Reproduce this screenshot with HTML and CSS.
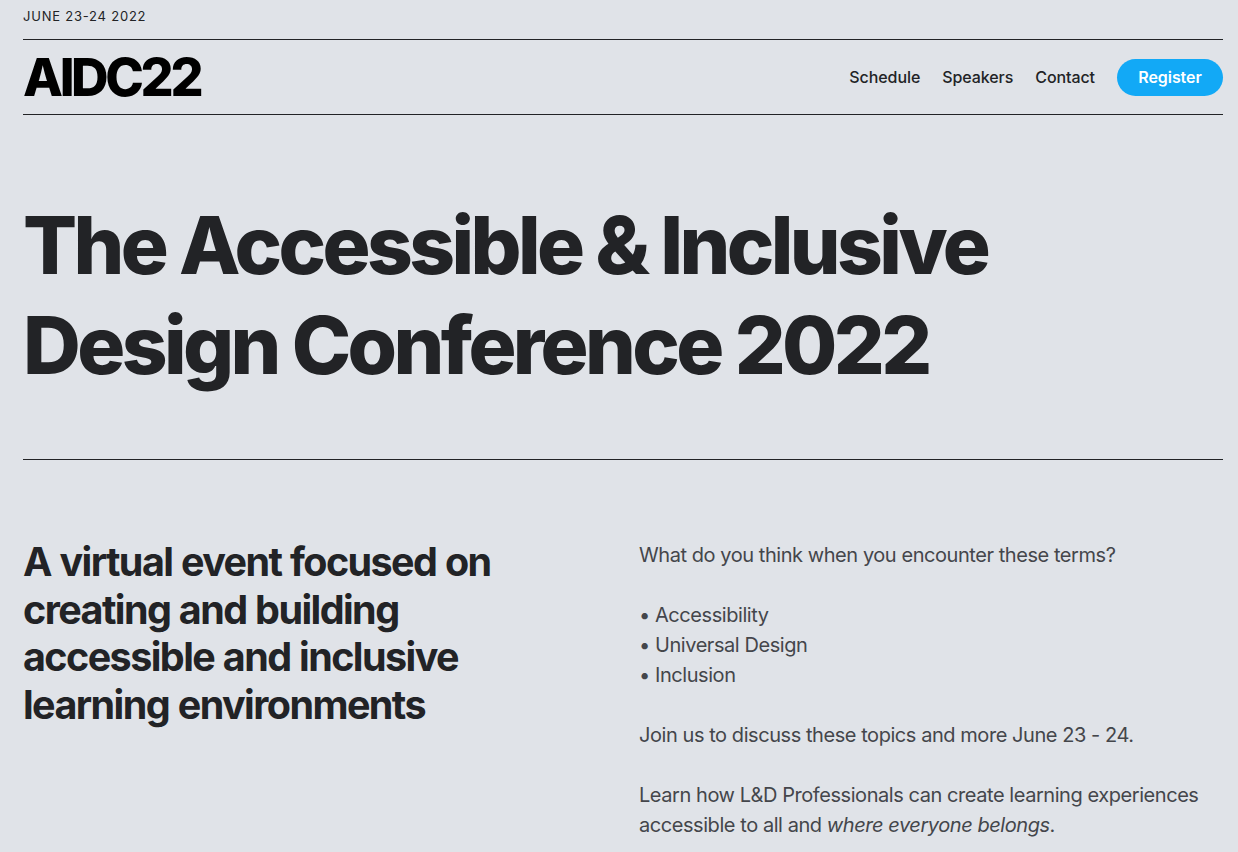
FILE: index.html
```html
<!DOCTYPE html>
<html lang="en">
<head>
<meta charset="utf-8">
<title>AIDC22</title>
<link rel="stylesheet" href="styles.css">
</head>
<body>
<div class="page">
  <div class="date">JUNE 23-24 2022</div>
  <header class="header">
    <a class="logo" href="#">AIDC22</a>
    <nav class="nav">
      <a href="#">Schedule</a>
      <a href="#">Speakers</a>
      <a href="#">Contact</a>
      <a class="register" href="#">Register</a>
    </nav>
  </header>
  <section class="hero">
    <h1>The Accessible &amp; Inclusive<br>Design Conference 2022</h1>
  </section>
  <section class="intro">
    <h2>A virtual event focused on creating and building accessible and inclusive learning environments</h2>
    <div class="copy">
      <p>What do you think when you encounter these terms?</p>
      <p>• Accessibility<br>• Universal Design<br>• Inclusion</p>
      <p>Join us to discuss these topics and more June 23 - 24.</p>
      <p>Learn how L&amp;D Professionals can create learning experiences accessible to all and <em>where everyone belongs</em>.</p>
    </div>
  </section>
</div>
</body>
</html>
```

FILE: styles.css
```css
* { box-sizing: border-box; }
html, body { margin: 0; padding: 0; }
body {
  background: #e0e3e8;
  color: #222326;
  font-family: Inter, "Noto Sans", sans-serif;
}
.page {
  width: 1200px;
  margin-left: 23px;
}
.date {
  font-size: 13px;
  letter-spacing: 0.06em;
  line-height: 16px;
  padding-top: 8px;
  padding-bottom: 15px;
  color: #222326;
}
.header {
  display: flex;
  align-items: center;
  justify-content: space-between;
  border-top: 1px solid #222326;
  border-bottom: 1px solid #222326;
  height: 76px;
}
.logo {
  font-size: 52px;
  font-weight: 800;
  letter-spacing: -0.065em;
  color: #000;
  text-decoration: none;
  line-height: 1;
  margin-top: 2px;
}
.nav {
  display: flex;
  align-items: center;
  gap: 22px;
}
.nav a {
  font-size: 16px;
  font-weight: 500;
  color: #222326;
  text-decoration: none;
  letter-spacing: -0.005em;
}
.nav a.register {
  background: #12a9f6;
  color: #fff;
  font-weight: 600;
  height: 37px;
  line-height: 37px;
  border-radius: 19px;
  width: 106px;
  text-align: center;
}
.hero {
  border-bottom: 1px solid #222326;
  padding-top: 80px;
  padding-bottom: 64px;
}
.hero h1 {
  margin: 0;
  font-size: 80px;
  font-weight: 800;
  line-height: 100px;
  letter-spacing: -0.045em;
}
.intro {
  display: grid;
  grid-template-columns: 584px 584px;
  column-gap: 32px;
  padding-top: 79px;
}
.intro h2 {
  margin: 0;
  max-width: 480px;
  font-size: 39.5px;
  font-weight: 700;
  line-height: 47.5px;
  letter-spacing: -0.04em;
  word-spacing: 0.02em;
}
.copy {
  font-size: 20px;
  line-height: 30px;
  color: #44464b;
  letter-spacing: -0.022em;
  margin-top: 1px;
}
.copy p { margin: 0 0 30px; }
```
